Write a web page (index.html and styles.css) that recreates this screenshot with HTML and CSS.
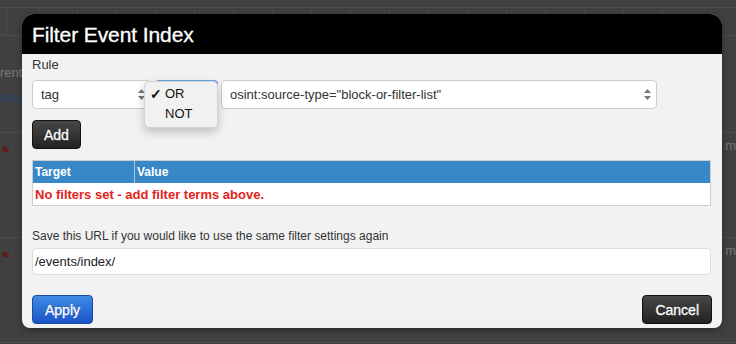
FILE: index.html
```html
<!DOCTYPE html>
<html lang="en">
<head>
  <meta charset="UTF-8">
  <title>Filter Event Index</title>
  <link rel="stylesheet" href="styles.css">
</head>
<body>
  <!-- page behind the modal, dimmed -->
  <div class="page">
    <div class="pager">
      <div class="pager-cells">
        <span class="cell first"></span>
        <span class="cell num">3</span>
        <span class="cell"></span><span class="cell"></span><span class="cell"></span>
        <span class="cell"></span><span class="cell"></span><span class="cell"></span>
        <span class="cell"></span><span class="cell"></span><span class="cell"></span>
        <span class="cell"></span><span class="cell"></span><span class="cell"></span>
        <span class="cell"></span><span class="cell"></span><span class="cell"></span>
        <span class="cell"></span><span class="cell last">&raquo;</span>
      </div>
    </div>
    <div class="bg-row first-row">
      <span class="bg-muted">rents</span>
      <span class="bg-link">wner</span>
    </div>
    <div class="bg-row">
      <span class="bg-flag">&#9873;</span>
      <span class="bg-right">m</span>
    </div>
    <div class="bg-row">
      <span class="bg-flag">&#9873;</span>
      <span class="bg-right">m</span>
    </div>
  </div>

  <div class="modal">
    <div class="modal-header">Filter Event Index</div>
    <div class="modal-body">
      <div class="label">Rule</div>
      <div class="rule-row">
        <div class="select select-rule">
          <span>tag</span>
          <svg class="arrows" width="7" height="11" viewBox="0 0 7 11"><path d="M3.5 0 L7 4 L0 4 Z M0 7 L7 7 L3.5 11 Z" fill="#777"/></svg>
        </div>
        <div class="select select-op focused"></div>
        <div class="select select-value">
          <span>osint:source-type="block-or-filter-list"</span>
          <svg class="arrows" width="7" height="11" viewBox="0 0 7 11"><path d="M3.5 0 L7 4 L0 4 Z M0 7 L7 7 L3.5 11 Z" fill="#777"/></svg>
        </div>
        <ul class="dropdown">
          <li><span class="check">&#10003;</span>OR</li>
          <li><span class="check"></span>NOT</li>
        </ul>
      </div>
      <div class="add-row">
        <button class="btn btn-dark">Add</button>
      </div>
      <table class="filters">
        <thead>
          <tr><th class="col-target">Target</th><th>Value</th></tr>
        </thead>
        <tbody>
          <tr><td colspan="2" class="empty">No filters set - add filter terms above.</td></tr>
        </tbody>
      </table>
      <div class="save-note">Save this URL if you would like to use the same filter settings again</div>
      <div class="url-box">/events/index/</div>
    </div>
    <div class="modal-footer">
      <button class="btn btn-primary">Apply</button>
      <button class="btn btn-dark btn-cancel">Cancel</button>
    </div>
  </div>
</body>
</html>
```

FILE: styles.css
```css
html, body {
  margin: 0;
  padding: 0;
}
body {
  width: 736px;
  height: 344px;
  overflow: hidden;
  position: relative;
  background: #404040;
  font-family: "Liberation Sans", Arial, sans-serif;
  color: #333;
}

/* dimmed page behind */
.page {
  height: 100%;
}
.pager {
  padding-top: 7px;
  border-bottom: 1px solid #4b4b4b;
}
.pager-cells {
  display: flex;
  height: 27px;
  border-top: 1px solid #4b4b4b;
}
.cell {
  width: 38px;
  flex-shrink: 0;
  border-right: 1px solid #4b4b4b;
  font-size: 13px;
  line-height: 27px;
  text-align: center;
  color: #2f4a66;
}
.cell.first { width: 6px; }
.cell.num { width: 31px; }
.cell.last {
  border-right: none;
  font-size: 10px;
  text-align: left;
  padding-left: 4px;
  color: #2f4a66;
}
.bg-row {
  position: relative;
  height: 104px;
  border-bottom: 1px solid #4b4b4b;
  font-size: 13px;
}
.bg-row.first-row {
  height: 96px;
}
.bg-muted {
  position: absolute;
  left: 0;
  top: 29px;
  color: #7a7a7a;
}
.bg-link {
  position: absolute;
  left: 0;
  top: 54px;
  color: #2c4560;
  font-weight: bold;
}
.bg-flag {
  position: absolute;
  left: 0;
  top: 11px;
  color: #5e1c1c;
  font-size: 12px;
}
.bg-right {
  position: absolute;
  right: 0;
  top: 5px;
  color: #777;
}

/* modal */
.modal {
  position: absolute;
  left: 22px;
  top: 14px;
  width: 700px;
  height: 314px;
  background: #f2f2f2;
  border-radius: 12px 12px 8px 8px;
  overflow: hidden;
  box-shadow: 0 2px 6px rgba(0,0,0,0.35);
  display: flex;
  flex-direction: column;
}
.modal-header {
  background: #000;
  color: #fff;
  height: 40px;
  line-height: 42px;
  padding-left: 10px;
  font-size: 21px;
  letter-spacing: -0.1px;
  -webkit-text-stroke: 0.3px #fff;
}
.modal-body {
  padding: 3px 10px 0 10px;
}
.label {
  font-size: 13px;
  line-height: 16px;
  height: 23px;
}
.rule-row {
  position: relative;
  display: flex;
  height: 29px;
}
.select {
  box-sizing: border-box;
  height: 29px;
  background: #fff;
  border: 1px solid #ccc;
  border-radius: 4px;
  display: flex;
  align-items: center;
  justify-content: space-between;
  padding: 0 5px 0 8px;
  font-size: 13px;
  color: #333;
}
.select-rule { width: 119px; }
.select-op {
  width: 63px;
  margin-left: 4px;
}
.select-op.focused {
  border: 2px solid #6aa6e0;
}
.select-value {
  width: 436px;
  margin-left: 3px;
}
.arrows { flex-shrink: 0; }
.dropdown {
  position: absolute;
  left: 112px;
  top: 1px;
  width: 72px;
  margin: 0;
  padding: 2px 0 3px;
  list-style: none;
  background: #f1f1f1;
  border: 1px solid #d4d4d4;
  border-radius: 5px;
  box-shadow: 0 4px 10px rgba(0,0,0,0.22);
  font-size: 13px;
  color: #111;
}
.dropdown li {
  height: 20px;
  line-height: 20px;
  display: flex;
}
.check {
  width: 20px;
  box-sizing: border-box;
  padding-left: 5px;
  font-size: 14px;
  font-weight: bold;
}
.add-row {
  padding-top: 11px;
  height: 29px;
}
.btn {
  font-family: "Liberation Sans", Arial, sans-serif;
  font-size: 14px;
  color: #fff;
  border-radius: 4px;
  height: 29px;
  padding: 0 11px;
  cursor: pointer;
  text-shadow: 0 -1px 0 rgba(0,0,0,0.4);
  -webkit-text-stroke: 0.3px #fff;
}
.btn-dark {
  background: linear-gradient(#474747, #222);
  border: 1px solid #111;
}
.btn-cancel {
  padding: 0 12px;
}
.btn-primary {
  background: linear-gradient(#3f8ce6, #1a54c6);
  border: 1px solid #1a4aa8;
  padding: 0 12px;
}
.filters {
  margin-top: 11px;
  width: 679px;
  border-collapse: collapse;
  border: 1px solid #ccc;
  font-size: 12px;
}
.filters th {
  background: #3888c8;
  color: #fff;
  text-align: left;
  height: 22px;
  padding: 0 2px;
  font-weight: bold;
}
.filters th.col-target {
  width: 97px;
  border-right: 1px solid #a9c6de;
}
.filters td {
  background: #fff;
  height: 22px;
  padding: 0 2px;
}
.empty {
  color: #e4231b;
  font-weight: bold;
  font-size: 13px;
}
.save-note {
  margin-top: 22px;
  font-size: 12px;
  line-height: 16px;
}
.url-box {
  box-sizing: border-box;
  margin-top: 4px;
  width: 679px;
  height: 27px;
  background: #fff;
  border: 1px solid #ddd;
  border-radius: 4px;
  padding-left: 2px;
  font-size: 13px;
  line-height: 25px;
  color: #222;
}
.modal-footer {
  display: flex;
  justify-content: space-between;
  padding: 20px 10px 0 10px;
}
```
